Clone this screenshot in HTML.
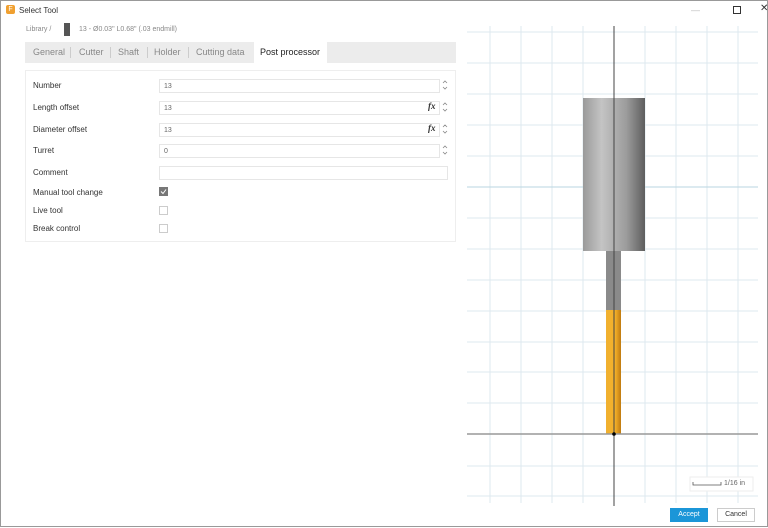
<!DOCTYPE html><html><head><style>
body{margin:0;width:768px;height:527px;background:#fff;font-family:"Liberation Sans",sans-serif;position:relative;overflow:hidden;border:1px solid #999;box-sizing:border-box}
.a{position:absolute}
.t{font-size:8px;color:#333}
.lbl{position:absolute;left:32px;font-size:8px;color:#333}
.inp{position:absolute;left:158px;width:281px;height:14px;border:1px solid #e6e6e6;box-sizing:border-box;font-size:7px;color:#666;padding:3px 4px}
.spin{position:absolute;left:441px;width:6px;height:12px}
.fx{position:absolute;left:427px;font-size:9px;font-style:italic;font-weight:bold;color:#333;font-family:"Liberation Serif",serif}
.cb{position:absolute;left:158px;width:7px;height:7px;border:1px solid #ccc}
.tab{position:absolute;top:41px;height:21px;line-height:21px;font-size:9px;color:#888}
</style></head><body>
<div class="a" style="left:5px;top:4px;width:9px;height:9px;background:#f0a030;border-radius:2px;font-size:7px;color:#fff;text-align:center;line-height:9px">F</div>
<div class="a t" style="left:18px;top:5px">Select Tool</div>
<div class="a" style="left:690px;top:4px;font-size:9px;color:#bbb">—</div>
<div class="a" style="left:732px;top:5px;width:6px;height:6px;border:1px solid #333"></div>
<div class="a" style="left:759px;top:2px;font-size:10px;color:#333">✕</div>
<div class="a" style="left:25px;top:25px;font-size:7px;color:#888">Library /</div>
<div class="a" style="left:63px;top:22px;width:6px;height:13px;background:#555"></div>
<div class="a" style="left:78px;top:25px;font-size:7px;color:#888">13 - Ø0.03" L0.68" (.03 endmill)</div>
<div class="a" style="left:24px;top:41px;width:431px;height:21px;background:#ececec"></div>
<div class="a" style="left:253px;top:41px;width:73px;height:21px;background:#fff"></div>
<div class="tab" style="left:32px">General</div><div class="a" style="left:69px;top:46px;width:1px;height:11px;background:#ccc"></div>
<div class="tab" style="left:78px">Cutter</div><div class="a" style="left:109px;top:46px;width:1px;height:11px;background:#ccc"></div>
<div class="tab" style="left:117px">Shaft</div><div class="a" style="left:146px;top:46px;width:1px;height:11px;background:#ccc"></div>
<div class="tab" style="left:153px">Holder</div><div class="a" style="left:187px;top:46px;width:1px;height:11px;background:#ccc"></div>
<div class="tab" style="left:195px">Cutting data</div>
<div class="tab" style="left:259px;color:#222">Post processor</div>
<div class="a" style="left:24px;top:69px;width:431px;height:172px;border:1px solid #eee;box-sizing:border-box"></div>
<svg width="0" height="0" style="position:absolute"><symbol id="sp" viewBox="0 0 6 12"><path d="M1 4l2-2 2 2M1 8l2 2 2-2" stroke="#888" fill="none" stroke-width="0.8"/></symbol></svg>
<div class="lbl" style="top:80px">Number</div><div class="inp" style="top:78px">13</div><svg class="spin" style="top:78px"><use href="#sp"/></svg>
<div class="lbl" style="top:102px">Length offset</div><div class="inp" style="top:100px">13</div><div class="fx" style="top:100px">fx</div><svg class="spin" style="top:100px"><use href="#sp"/></svg>
<div class="lbl" style="top:124px">Diameter offset</div><div class="inp" style="top:122px">13</div><div class="fx" style="top:122px">fx</div><svg class="spin" style="top:122px"><use href="#sp"/></svg>
<div class="lbl" style="top:145px">Turret</div><div class="inp" style="top:143px">0</div><svg class="spin" style="top:143px"><use href="#sp"/></svg>
<div class="lbl" style="top:167px">Comment</div><div class="inp" style="top:165px;width:289px"></div>
<div class="lbl" style="top:187px">Manual tool change</div><div class="cb" style="top:186px;background:#777;border-color:#777"><svg width="7" height="7" style="display:block"><path d="M1 3.5l2 2 3-4" stroke="#fff" fill="none" stroke-width="1"/></svg></div>
<div class="lbl" style="top:205px">Live tool</div><div class="cb" style="top:205px"></div>
<div class="lbl" style="top:223px">Break control</div><div class="cb" style="top:223px"></div>
<svg class="a" style="left:0;top:0" width="768" height="527">
<g stroke="#dde9ef" stroke-width="1">
<line x1="489" y1="25" x2="489" y2="502"/><line x1="520" y1="25" x2="520" y2="502"/><line x1="551" y1="25" x2="551" y2="502"/><line x1="582" y1="25" x2="582" y2="502"/><line x1="644" y1="25" x2="644" y2="502"/><line x1="675" y1="25" x2="675" y2="502"/><line x1="706" y1="25" x2="706" y2="502"/><line x1="737" y1="25" x2="737" y2="502"/>
<line x1="466" y1="31" x2="757" y2="31"/><line x1="466" y1="62" x2="757" y2="62"/><line x1="466" y1="93" x2="757" y2="93"/><line x1="466" y1="124" x2="757" y2="124"/><line x1="466" y1="155" x2="757" y2="155"/><line x1="466" y1="186" x2="757" y2="186" stroke="#b9d6e2"/><line x1="466" y1="217" x2="757" y2="217"/><line x1="466" y1="248" x2="757" y2="248"/><line x1="466" y1="279" x2="757" y2="279"/><line x1="466" y1="310" x2="757" y2="310"/><line x1="466" y1="341" x2="757" y2="341"/><line x1="466" y1="371" x2="757" y2="371"/><line x1="466" y1="402" x2="757" y2="402"/><line x1="466" y1="465" x2="757" y2="465"/><line x1="466" y1="495" x2="757" y2="495"/>
</g>
<defs><linearGradient id="g" x1="0" x2="1"><stop offset="0" stop-color="#9a9a9a"/><stop offset="0.3" stop-color="#c4c4c4"/><stop offset="0.7" stop-color="#9c9c9c"/><stop offset="1" stop-color="#5e5e5e"/></linearGradient>
<linearGradient id="o" x1="0" x2="1"><stop offset="0" stop-color="#f0b030"/><stop offset="0.6" stop-color="#f5b22a"/><stop offset="1" stop-color="#c07a10"/></linearGradient></defs>
<rect x="582" y="97" width="62" height="153" fill="url(#g)"/>
<rect x="605" y="250" width="15" height="59" fill="#8a8a8a"/>
<rect x="605" y="309" width="15" height="124" fill="url(#o)"/>
<line x1="466" y1="433" x2="757" y2="433" stroke="#999" stroke-width="1.5"/>
<line x1="613" y1="25" x2="613" y2="505" stroke="#444" stroke-width="1"/>
<circle cx="613" cy="433" r="1.8" fill="#000"/>
<rect x="689" y="476" width="63" height="14" fill="#fff" stroke="#eee"/>
<path d="M692 481v3h28v-3" stroke="#555" fill="none" stroke-width="0.8"/>
</svg>
<div class="a" style="left:723px;top:479px;font-size:7px;color:#666">1/16 in</div>
<div class="a" style="left:669px;top:507px;width:38px;height:14px;background:#1b96d8;color:#fff;font-size:7px;text-align:center;line-height:14px">Accept</div>
<div class="a" style="left:716px;top:507px;width:38px;height:14px;border:1px solid #ccc;box-sizing:border-box;color:#333;font-size:7px;text-align:center;line-height:12px">Cancel</div>
</body></html>
